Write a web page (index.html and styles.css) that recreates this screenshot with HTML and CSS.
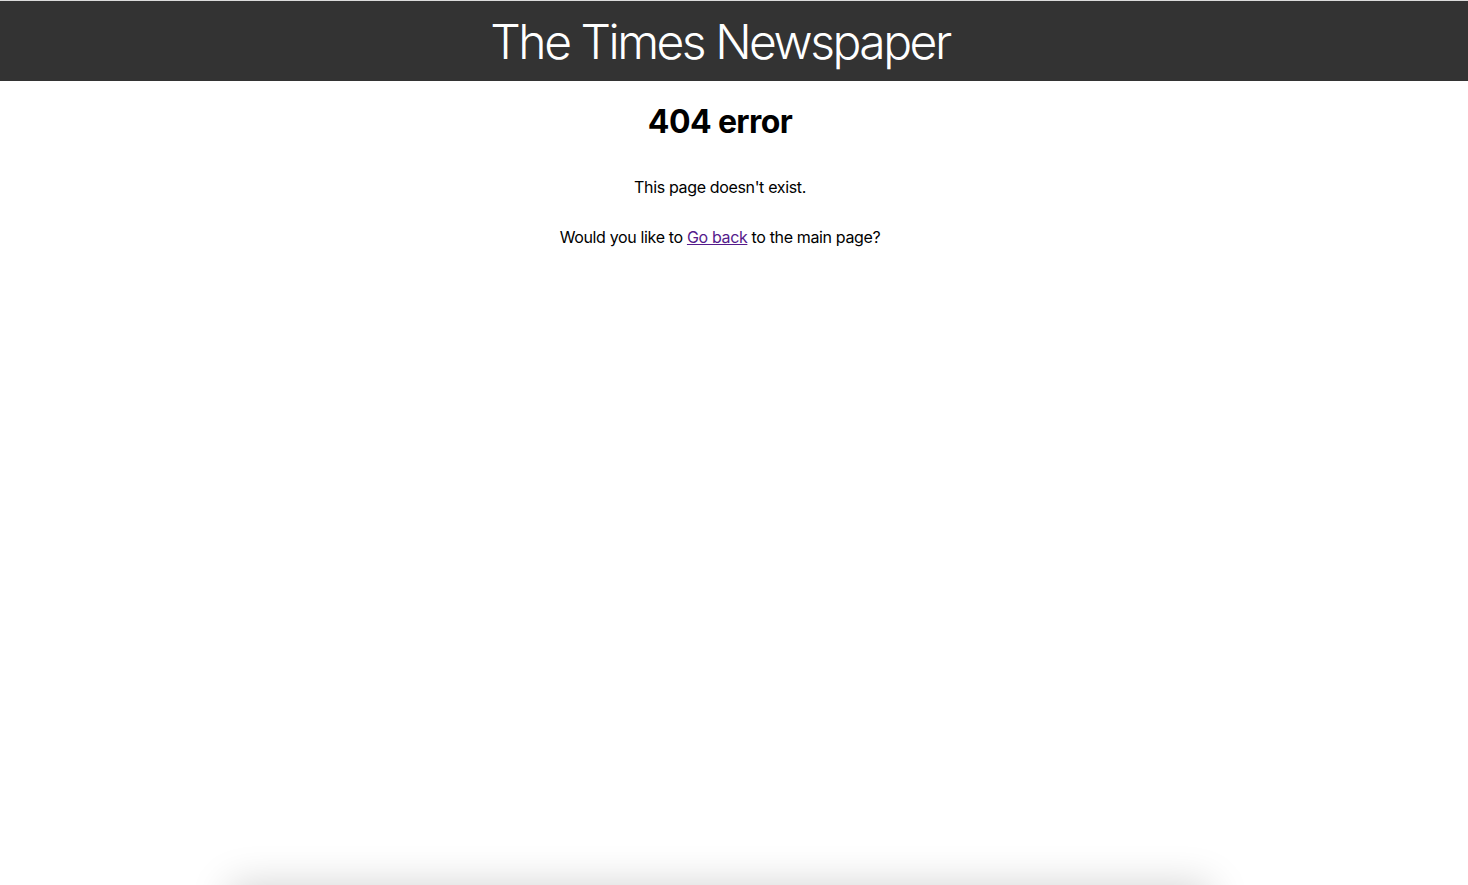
FILE: index.html
```html
<!DOCTYPE html>
<html lang="en">
<head>
<meta charset="utf-8">
<title>404 error - The Times Newspaper</title>
<link rel="stylesheet" href="styles.css">
</head>
<body>
<div class="page">
  <header class="masthead">
    <div class="masthead-inner">
      <div class="brand">The Times Newspaper</div>
    </div>
  </header>
  <main class="content">
    <h1 class="title">404 error</h1>
    <p class="msg">This page doesn't exist.</p>
    <p class="msg">Would you like to <a class="back" href="#">Go back</a> to the main page?</p>
  </main>
</div>
<div class="footer-wrap">
  <footer class="footer"></footer>
</div>
</body>
</html>
```

FILE: styles.css
```css
html, body {
  margin: 0;
  padding: 0;
}
body {
  font-family: Inter, "Noto Sans", "Liberation Sans", sans-serif;
  color: #000;
  background: #fff;
}
.page {
  min-height: 885px;
  box-sizing: border-box;
}
.masthead {
  border-top: 1px solid #dcdcdc;
  height: 80px;
  background: #333333;
}
.masthead-inner {
  width: 1440px;
  height: 100%;
  display: flex;
  align-items: center;
  justify-content: center;
}
.brand {
  color: #fff;
  font-size: 48px;
  font-weight: 300;
  line-height: normal;
  letter-spacing: -2.5px;
}
.content {
  width: 1440px;
  text-align: center;
}
.title {
  font-size: 32px;
  font-weight: 700;
  margin: 21px 0 34px;
  line-height: normal;
  letter-spacing: -0.6px;
}
.msg {
  font-size: 16px;
  line-height: 24px;
  margin: 0 0 26px;
  letter-spacing: -0.35px;
}
.back {
  color: #551a8b;
}
.footer-wrap {
  width: 1440px;
}
.footer {
  width: 980px;
  height: 60px;
  margin: 0 auto;
  box-shadow: 0 0 40px rgba(0, 0, 0, 0.18);
}
```
